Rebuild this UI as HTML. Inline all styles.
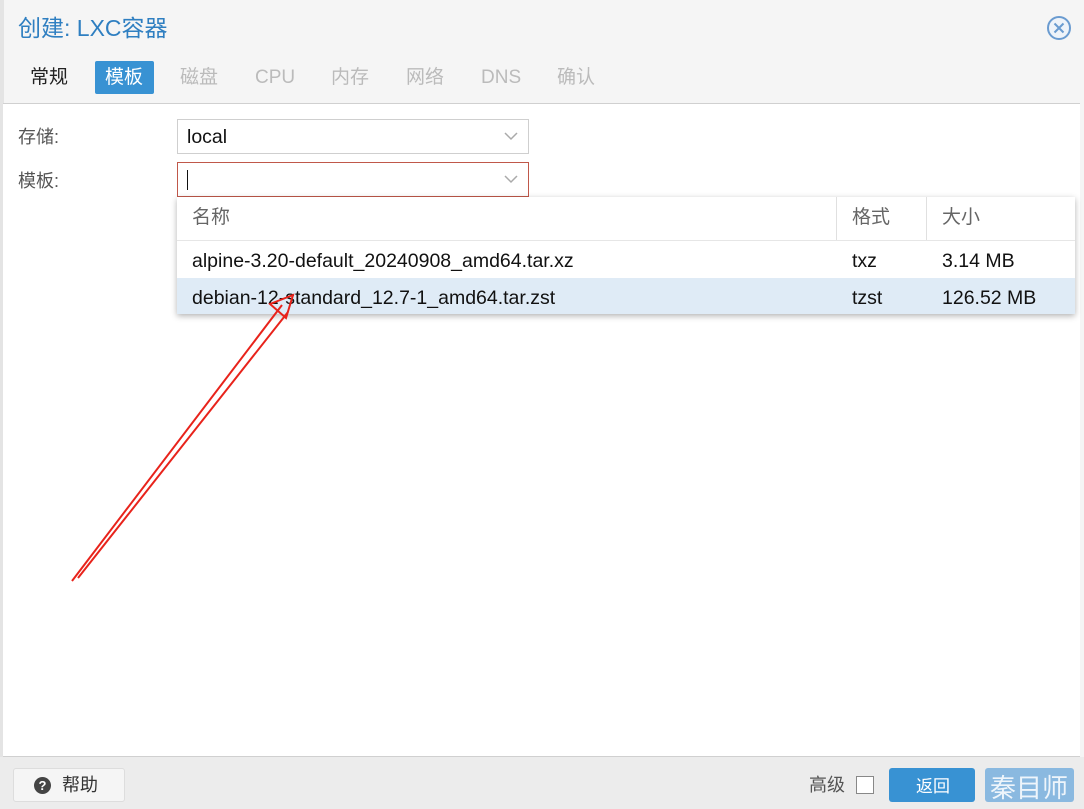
<!DOCTYPE html>
<html><head><meta charset="utf-8"><style>
body{margin:0;width:1084px;height:809px;background:#f5f5f5;font-family:"Liberation Sans","Noto Sans CJK SC",sans-serif;position:relative;overflow:hidden}
.a{position:absolute;line-height:24px}
.tab{position:absolute;top:63px;font-size:19px;color:#bbb;line-height:30px}
.r{font-size:19.5px;color:#111}
</style></head><body>
<div class="a" style="left:0;top:0;width:4px;height:809px;background:#e4e4e4"></div>
<div class="a" style="left:18px;top:14px;font-size:23px;line-height:28px;color:#2f7fc1">创建: LXC容器</div>
<svg class="a" style="left:1046px;top:15px" width="26" height="26" viewBox="0 0 26 26"><circle cx="13" cy="13" r="11" fill="#eef3f9" stroke="#6a9bd0" stroke-width="2"/><path d="M8.5 8.5L17.5 17.5M17.5 8.5L8.5 17.5" stroke="#6a9bd0" stroke-width="2"/></svg>
<div class="tab" style="left:30px;color:#222">常规</div>
<div class="a" style="left:95px;top:61px;width:59px;height:33px;background:#3892d3;border-radius:2px"></div>
<div class="tab" style="left:105px;color:#fff">模板</div>
<div class="tab" style="left:180px">磁盘</div>
<div class="tab" style="left:255px">CPU</div>
<div class="tab" style="left:331px">内存</div>
<div class="tab" style="left:406px">网络</div>
<div class="tab" style="left:481px">DNS</div>
<div class="tab" style="left:557px">确认</div>
<div class="a" style="left:3px;top:103px;width:1077px;height:652px;background:#fff;border-top:1px solid #d0d0d0;border-bottom:1px solid #d0d0d0"></div>
<div class="a" style="left:0;top:757px;width:1084px;height:52px;background:#ececec"></div>
<div class="a" style="left:18px;top:125px;font-size:18px;color:#555">存储:</div>
<div class="a" style="left:18px;top:169px;font-size:18px;color:#555">模板:</div>
<div class="a" style="left:177px;top:119px;width:350px;height:33px;border:1px solid #cfcfcf;background:#fff"></div>
<div class="a r" style="left:187px;top:125px">local</div>
<div class="a" style="left:177px;top:162px;width:350px;height:33px;border:1px solid #c0584a;background:#fff"></div>
<div class="a" style="left:187px;top:170px;width:1px;height:20px;background:#111"></div>
<svg class="a" style="left:503px;top:130px" width="16" height="12"><path d="M2 3L8 9L14 3" fill="none" stroke="#aaa" stroke-width="1.5"/></svg>
<svg class="a" style="left:503px;top:173px" width="16" height="12"><path d="M2 3L8 9L14 3" fill="none" stroke="#aaa" stroke-width="1.5"/></svg>
<div class="a" style="left:177px;top:197px;width:898px;height:117px;background:#fff;box-shadow:0 2px 6px rgba(0,0,0,.3)"></div>
<div class="a" style="left:177px;top:240px;width:898px;height:1px;background:#e6e6e6"></div>
<div class="a" style="left:836px;top:197px;width:1px;height:43px;background:#e0e0e0"></div>
<div class="a" style="left:926px;top:197px;width:1px;height:43px;background:#e0e0e0"></div>
<div class="a" style="left:177px;top:278px;width:898px;height:36px;background:#dfebf6"></div>
<div class="a" style="left:192px;top:206px;font-size:19px;color:#666">名称</div>
<div class="a" style="left:852px;top:206px;font-size:19px;color:#666">格式</div>
<div class="a" style="left:942px;top:206px;font-size:19px;color:#666">大小</div>
<div class="a r" style="left:192px;top:249px">alpine-3.20-default_20240908_amd64.tar.xz</div>
<div class="a r" style="left:852px;top:249px">txz</div>
<div class="a r" style="left:942px;top:249px">3.14 MB</div>
<div class="a r" style="left:192px;top:286px">debian-12-standard_12.7-1_amd64.tar.zst</div>
<div class="a r" style="left:852px;top:286px">tzst</div>
<div class="a r" style="left:942px;top:286px">126.52 MB</div>
<svg class="a" style="left:0;top:0" width="1084" height="809"><g fill="none" stroke="#e8231b" stroke-width="2"><path d="M72 581L282 305M78 578L288 312"/><path d="M270 304L293 295L286 318Z"/></g></svg>
<div class="a" style="left:13px;top:768px;width:110px;height:32px;background:#f5f5f5;border:1px solid #ddd;border-radius:3px"></div>
<div class="a" style="left:34px;top:777px;width:17px;height:17px;border-radius:50%;background:#444;color:#fff;font-size:13px;font-weight:bold;text-align:center;line-height:17px">?</div>
<div class="a" style="left:62px;top:773px;font-size:18px;color:#333">帮助</div>
<div class="a" style="left:809px;top:773px;font-size:18px;color:#555">高级</div>
<div class="a" style="left:856px;top:776px;width:16px;height:16px;border:1px solid #888;background:#fff"></div>
<div class="a" style="left:889px;top:768px;width:86px;height:34px;background:#3892d3;border-radius:3px"></div>
<div class="a" style="left:916px;top:775px;font-size:17px;color:#fff">返回</div>
<div class="a" style="left:985px;top:768px;width:89px;height:34px;background:#8ab9e0;border-radius:3px"></div>
<div class="a" style="left:990px;top:773px;font-size:26px;line-height:30px;color:#eef5fb">秦目师</div>
</body></html>
